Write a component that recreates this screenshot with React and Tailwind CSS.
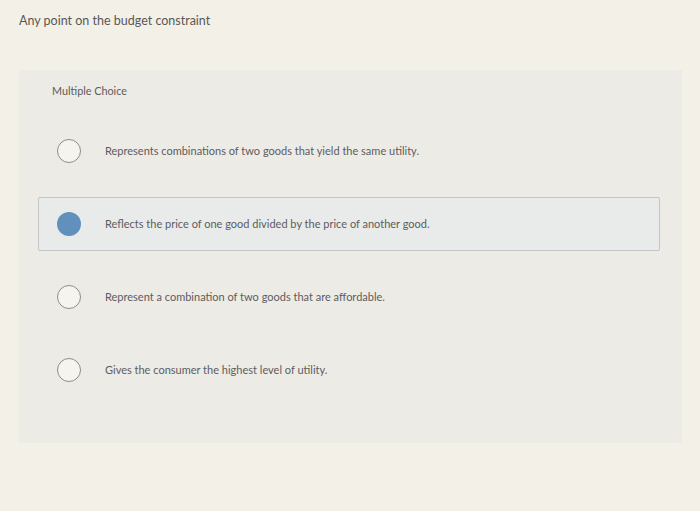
export default function App() {
  const opts = [
    { t: "Represents combinations of two goods that yield the same utility.", sel: false },
    { t: "Reflects the price of one good divided by the price of another good.", sel: true },
    { t: "Represent a combination of two goods that are affordable.", sel: false },
    { t: "Gives the consumer the highest level of utility.", sel: false },
  ];
  return (
    <div className="w-[700px] h-[511px] bg-[#f3f0e8] overflow-hidden" style={{ fontFamily: "Lato, 'Open Sans', sans-serif" }}>
      <div className="pl-[19px] pt-[13px] text-[12.5px] text-[#5a5855] leading-[16px]">Any point on the budget constraint</div>
      <div className="ml-[19px] mt-[41px] w-[663px] h-[373px] bg-[#ecebe6] pt-[14px]">
        <div className="pl-[33px] text-[10.8px] text-[#5e5c59] leading-[14px]">Multiple Choice</div>
        <div className="flex flex-col mt-[26px] gap-[19px]">
          {opts.map((o, i) => (
            <div
              key={i}
              className={
                o.sel
                  ? "ml-[19px] w-[622px] h-[54px] flex items-center bg-[#e8ebe9] border border-[#c3c5c6] rounded-[2px] pl-[18px]"
                  : "ml-[19px] w-[622px] h-[54px] flex items-center border border-transparent pl-[18px]"
              }
            >
              {o.sel ? (
                <div className="w-[24px] h-[24px] rounded-full bg-[#6190bd] shrink-0" />
              ) : (
                <div className="w-[24px] h-[24px] rounded-full border border-[#8d8c8a] bg-[#f6f4ef] shrink-0" />
              )}
              <div className="ml-[24px] text-[11px] text-[#5e5c5e] leading-[14px]">{o.t}</div>
            </div>
          ))}
        </div>
      </div>
    </div>
  );
}
